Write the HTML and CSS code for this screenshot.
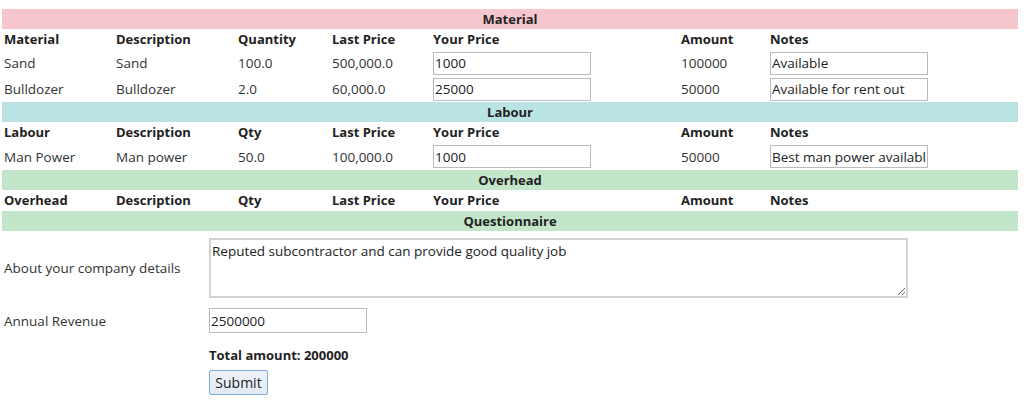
FILE: index.html
```html
<!DOCTYPE html>
<html>
<head>
<meta charset="utf-8">
<link rel="stylesheet" href="styles.css">
</head>
<body>
<div class="page">
  <table class="quote">
    <colgroup>
      <col class="c1"><col class="c2"><col class="c3"><col class="c4"><col class="c5"><col class="c6"><col class="c7">
    </colgroup>
    <tbody>
      <tr class="band band-material"><th colspan="7">Material</th></tr>
      <tr class="head"><th>Material</th><th>Description</th><th>Quantity</th><th>Last Price</th><th>Your Price</th><th>Amount</th><th>Notes</th></tr>
      <tr class="row"><td>Sand</td><td>Sand</td><td>100.0</td><td>500,000.0</td><td><input class="field" type="text" value="1000"></td><td>100000</td><td><input class="field" type="text" value="Available"></td></tr>
      <tr class="row"><td>Bulldozer</td><td>Bulldozer</td><td>2.0</td><td>60,000.0</td><td><input class="field" type="text" value="25000"></td><td>50000</td><td><input class="field" type="text" value="Available for rent out"></td></tr>
      <tr class="band band-labour"><th colspan="7">Labour</th></tr>
      <tr class="head"><th>Labour</th><th>Description</th><th>Qty</th><th>Last Price</th><th>Your Price</th><th>Amount</th><th>Notes</th></tr>
      <tr class="row row-last"><td>Man Power</td><td>Man power</td><td>50.0</td><td>100,000.0</td><td><input class="field" type="text" value="1000"></td><td>50000</td><td><input class="field" type="text" value="Best man power available"></td></tr>
      <tr class="band band-green"><th colspan="7">Overhead</th></tr>
      <tr class="head"><th>Overhead</th><th>Description</th><th>Qty</th><th>Last Price</th><th>Your Price</th><th>Amount</th><th>Notes</th></tr>
      <tr class="band band-green"><th colspan="7">Questionnaire</th></tr>
    </tbody>
  </table>
  <form class="questions">
    <label class="q-label">About your company details</label>
    <textarea class="q-area">Reputed subcontractor and can provide good quality job</textarea>
    <label class="q-label q-label-rev">Annual Revenue</label>
    <input class="field q-input" type="text" value="2500000">
    <div class="total">Total amount: 200000</div>
    <div class="actions"><button type="button" class="submit">Submit</button></div>
  </form>
</div>
</body>
</html>
```

FILE: styles.css
```css
html, body {
  margin: 0;
  padding: 0;
  background: #fff;
}
body {
  font-family: "Open Sans", "Noto Sans", sans-serif;
  font-size: 13.5px;
  color: #333;
}
.page {
  padding: 9px 6px 0 2px;
}
.quote {
  width: 1016px;
  border-collapse: collapse;
  table-layout: fixed;
}
.c1 { width: 112px; }
.c2 { width: 122px; }
.c3 { width: 94px; }
.c4 { width: 101px; }
.c5 { width: 248px; }
.c6 { width: 89px; }
.c7 { width: 250px; }

.quote th, .quote td {
  padding: 0 2px;
  text-align: left;
  white-space: nowrap;
  overflow: hidden;
  vertical-align: middle;
}
.quote th {
  font-size: 13px;
  font-weight: 700;
  color: #222;
}
.band th {
  height: 20px;
  text-align: center;
  line-height: 20px;
}
.band-material th { background: #f5c6cb; }
.band-labour th { background: #b9e4e3; }
.band-green th { background: #c3e6cb; }
.head th {
  height: 21px;
  line-height: 21px;
}
.row td {
  height: 26px;
  line-height: 20px;
}
.row-last td {
  height: 27px;
}
.field {
  display: block;
  box-sizing: border-box;
  width: 158px;
  height: 23px;
  margin: 0;
  padding: 0 1px;
  border: 1px solid #bcbcbc;
  font-family: "Open Sans", "Noto Sans", sans-serif;
  font-size: 13.5px;
  color: #222;
  background: #fff;
}
.questions {
  display: grid;
  grid-template-columns: 205px auto;
  align-items: center;
  justify-items: start;
  padding: 7px 0 0 2px;
  row-gap: 0;
}
.q-label {
  color: #333;
}
.q-area {
  box-sizing: border-box;
  width: 699px;
  height: 60px;
  margin: 0;
  padding: 2px 1px;
  border: 2px solid #d3d3d3;
  font-family: "Open Sans", "Noto Sans", sans-serif;
  font-size: 13.5px;
  color: #222;
}
.q-label-rev,
.q-input {
  margin-top: 10px;
}
.q-input {
  width: 158px;
  height: 25px;
}
.total {
  grid-column: 2;
  margin-top: 13px;
  font-size: 13px;
  font-weight: 700;
  color: #222;
}
.actions {
  grid-column: 2;
  margin-top: 6px;
}
.submit {
  box-sizing: border-box;
  width: 59px;
  height: 25px;
  padding: 0;
  border: 1px solid #7eaadc;
  border-radius: 2px;
  background: linear-gradient(#eef3f9, #e1e9f2);
  font-family: "Open Sans", "Noto Sans", sans-serif;
  font-size: 14px;
  color: #222;
}
```
